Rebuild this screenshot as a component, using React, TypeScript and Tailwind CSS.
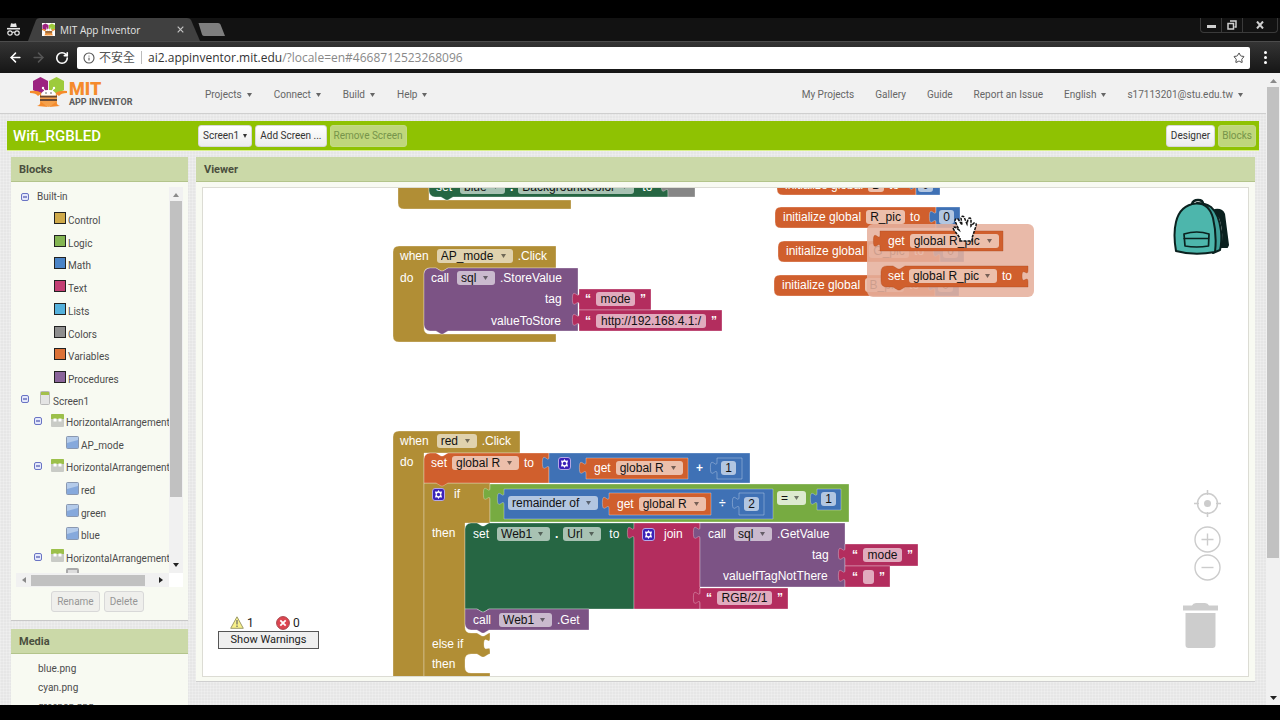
import type { ReactNode } from 'react';
import { ArrowLeft, ArrowRight, Info, RotateCw, Star } from 'lucide-react';

const GOLD = '#b18e35';
const PURPLE = '#7c5385';
const PINK = '#b32d5e';
const BLUE = '#3f71b5';
const ORANGE = '#d05f2d';
const LIME = '#77ab41';
const FOREST = '#266643';

// How far the workspace is scrolled: block coordinates are shifted by this.
const PAN = { x: 203, y: 188 };

const CATEGORIES = [
  { name: 'Control', swatch: 'bg-[#cfa94a]' },
  { name: 'Logic', swatch: 'bg-[#84b552]' },
  { name: 'Math', swatch: 'bg-[#4a83c6]' },
  { name: 'Text', swatch: 'bg-[#c33f74]' },
  { name: 'Lists', swatch: 'bg-[#55b1dc]' },
  { name: 'Colors', swatch: 'bg-[#8e8e8e]' },
  { name: 'Variables', swatch: 'bg-[#dc7237]' },
  { name: 'Procedures', swatch: 'bg-[#8a649a]' },
];

const COMPONENTS: { name: string; container?: boolean }[] = [
  { name: 'HorizontalArrangement1', container: true },
  { name: 'AP_mode' },
  { name: 'HorizontalArrangement2', container: true },
  { name: 'red' },
  { name: 'green' },
  { name: 'blue' },
  { name: 'HorizontalArrangement3', container: true },
];

export default function App() {
  return (
    <div className="flex h-screen flex-col overflow-hidden bg-black pt-[18px] pb-[15px] font-['Roboto',sans-serif]">
      <TabStrip />
      <Toolbar />
      <div className="flex min-h-0 flex-1">
        <div className="flex min-w-0 flex-1 flex-col bg-[#e6e6e6] bg-[linear-gradient(90deg,#ffffff30_1px,transparent_1px),linear-gradient(#ffffff30_1px,transparent_1px)] bg-size-[3px_3px]">
          <Header />
          <ProjectBar />
          <div className="flex min-h-0 flex-1 gap-2 pr-[11px] pl-[11px]">
            <aside className="flex w-[177px] shrink-0 flex-col gap-2 overflow-hidden">
              <BlocksPanel />
              <MediaPanel />
            </aside>
            <Viewer />
          </div>
        </div>
        <PageScrollbar />
      </div>
    </div>
  );
}

/* ---------- browser chrome ---------- */

function TabStrip() {
  return (
    <div className="flex h-[23px] shrink-0 bg-[#121212]">
      <svg className="mt-1 ml-[6px] size-[15px]" viewBox="0 0 15 15" fill="none" stroke="#e8e8e8">
        <path d="M4.2 5 5 1.2 7.5 1.8 10 1.2 10.8 5Z" fill="#e8e8e8" stroke="none" />
        <path d="M1 6.7h13" strokeWidth="1.6" />
        <circle cx="4" cy="11" r="2.2" strokeWidth="1.2" />
        <circle cx="11" cy="11" r="2.2" strokeWidth="1.2" />
        <path d="M6.2 10.6q1.3-.8 2.6 0" strokeWidth="1.2" />
      </svg>
      <div className="relative ml-[7px] flex w-[172px] items-center pr-[16px] pl-[14px]">
        <svg className="absolute inset-0 size-full" viewBox="0 0 172 23" preserveAspectRatio="none">
          <path d="M0 23 8 2Q9 0 12 0H159Q162 0 163 2L172 23Z" fill="#404040" />
        </svg>
        <Bee className="relative size-[13px] bg-white" viewBox="2 0 32 30" />
        <span className="relative ml-[5px] flex-1 truncate font-['Open_Sans',sans-serif] text-[10px] leading-[20px] text-[#e4e4e4]">
          MIT App Inventor
        </span>
        <button aria-label="Close tab" className="relative">
          <svg className="size-[7px]" viewBox="0 0 7 7" stroke="#c4c4c4" strokeWidth="1.2">
            <path d="M.7.7l5.6 5.6M6.3.7.7 6.3" />
          </svg>
        </button>
      </div>
      <button aria-label="New tab" className="-ml-[3px] self-center">
        <svg className="h-[15px] w-[29px]" viewBox="0 0 29 15">
          <path d="M1.5 1H21q2 0 2.5 1.5L28 14H7.5Q5.5 14 5 12.5Z" fill="#7e7e7e" />
        </svg>
      </button>
      <div className="mr-[2px] ml-auto flex h-[15px] rounded-b border border-t-0 border-[#3a3a3a]">
        <button aria-label="Minimize" className="flex w-[20px] items-center justify-center">
          <span className="mt-[3px] h-[3px] w-[9px] bg-[#cfcfcf]" />
        </button>
        <button aria-label="Restore" className="flex w-[22px] items-center justify-center border-x border-[#3a3a3a]">
          <svg className="size-[10px]" viewBox="0 0 10 10" fill="none" stroke="#cfcfcf" strokeWidth="1.5">
            <path d="M3 1h6v6H7.5" />
            <rect x="1" y="3.5" width="5.5" height="5.5" />
          </svg>
        </button>
        <button aria-label="Close" className="flex w-[34px] items-center justify-center">
          <svg className="size-[8px]" viewBox="0 0 8 8" stroke="#cfcfcf" strokeWidth="2">
            <path d="M1 .5l6 7M7 .5l-6 7" />
          </svg>
        </button>
      </div>
    </div>
  );
}

function Toolbar() {
  return (
    <div className="flex h-8 shrink-0 items-center border-t border-[#4c4c4c] bg-linear-to-b from-[#343434] to-[#161616] pr-[13px] pl-2">
      <button aria-label="Back">
        <ArrowLeft className="size-[15px] text-white" strokeWidth={2.4} />
      </button>
      <button aria-label="Forward" className="ml-2">
        <ArrowRight className="size-[15px] text-[#565656]" strokeWidth={2.4} />
      </button>
      <button aria-label="Reload" className="mr-2 ml-[9px]">
        <RotateCw className="size-[14px] text-white" strokeWidth={2.8} />
      </button>
      <div className="flex h-[22px] flex-1 items-center rounded-xs bg-white pr-[5px] pl-[6px] font-['Open_Sans','Noto_Sans_CJK_TC',sans-serif] text-[12px] text-[#555]">
        <Info className="size-[12px]" strokeWidth={2.2} />
        <span className="ml-1 leading-[22px]">不安全</span>
        <span className="mr-[6px] ml-[6px] h-[13px] w-px bg-[#bbb]" />
        <div className="flex-1 leading-[22px] text-[#888]">
          <span className="text-[#333]">ai2.appinventor.mit.edu</span>/?locale=en#4668712523268096
        </div>
        <button aria-label="Bookmark">
          <Star className="size-[12px] text-[#444]" strokeWidth={2} />
        </button>
      </div>
      <button aria-label="Browser menu" className="ml-[14px] flex flex-col gap-[2px]">
        <span className="size-[3px] rounded-full bg-white" />
        <span className="size-[3px] rounded-full bg-white" />
        <span className="size-[3px] rounded-full bg-white" />
      </button>
    </div>
  );
}

function PageScrollbar() {
  return (
    <div className="flex w-[14px] shrink-0 flex-col items-center justify-between bg-[#f1f1f1] pt-[6px] pb-[5px]">
      <Triangle className="h-[4px] w-[7px] rotate-180 text-[#8a8a8a]" />
      <div className="mt-[4px] mb-auto h-[471px] w-[12px] bg-[#c1c1c1]" />
      <Triangle className="h-[4px] w-[7px] text-[#222]" />
    </div>
  );
}

function Triangle({ className }: { className: string }) {
  return (
    <svg className={className} viewBox="0 0 8 6" preserveAspectRatio="none" fill="currentColor">
      <path d="M0 0h8L4 6Z" />
    </svg>
  );
}

/* ---------- app header ---------- */

function Bee({ className, viewBox = '0 0 37 30' }: { className: string; viewBox?: string }) {
  return (
    <svg className={className} viewBox={viewBox}>
      <path d="M10.500 0 18 4v9l-7.500 4L3 13V4Z" fill="#9c2380" />
      <path d="M26.500 0 34 4v9l-7.500 4L19 13V4Z" fill="#9dcb3b" />
      <path d="M0 14q7-1 12 2l-4 3q-2-3-8-3ZM37 14q-7-1-12 2l4 3q2-3 8-3Z" fill="#f58b2c" />
      <path d="M10 17h17v9l-8.500 4-8.500-4Z" fill="#f5a04a" />
      <path d="M10 19.500h17M10 23h17" stroke="#6a4a33" strokeWidth="1.800" />
      <path d="M7 29q3-1 4-4l7 5ZM30 29q-3-1-4-4l-7 5Z" fill="#f58b2c" />
      <path d="M11 18.500q0-5.500 7.500-5.500t7.500 5.500Z" fill="#fff" />
      <path d="M15 14l-2-3M22 14l2-3" stroke="#fff" strokeWidth="1.200" />
      <circle cx="13" cy="11" r="1.200" fill="#fff" />
      <circle cx="24" cy="11" r="1.200" fill="#fff" />
      <circle cx="16" cy="16" r=".8" fill="#555" />
      <circle cx="21" cy="16" r=".8" fill="#555" />
    </svg>
  );
}

function MenuButton({ label }: { label: string }) {
  return (
    <button className="flex items-center gap-[5px]">
      {label}
      <Triangle className="h-[4px] w-[5px]" />
    </button>
  );
}

function Header() {
  return (
    <header className="flex h-[41px] shrink-0 items-center border-b border-[#cfcfcf] bg-[#f1f1f1] pr-[23px] pl-[30px] text-[10px] text-[#666]">
      <a href="#home" className="flex w-[175px] items-center gap-[2px] pb-[3px]">
        <Bee className="h-[30px] w-[37px]" />
        <span className="flex flex-col pt-[4px]">
          <b className="text-[18px] leading-[18px] font-black text-[#f58b2c]">MIT</b>
          <b className="text-[9px] leading-[9px] font-bold whitespace-nowrap text-[#5c5c5c]">APP INVENTOR</b>
        </span>
      </a>
      <nav className="flex gap-[22px] pt-[3px]">
        <MenuButton label="Projects" />
        <MenuButton label="Connect" />
        <MenuButton label="Build" />
        <MenuButton label="Help" />
      </nav>
      <nav className="ml-auto flex gap-[21px] pt-[3px]">
        <a href="#projects">My Projects</a>
        <a href="#gallery">Gallery</a>
        <a href="#guide">Guide</a>
        <a href="#issue">Report an Issue</a>
        <MenuButton label="English" />
        <MenuButton label="s17113201@stu.edu.tw" />
      </nav>
    </header>
  );
}

const BAR_BUTTON =
  'flex h-[22px] items-center gap-[4px] rounded-[3px] border border-[#d8d8d8] bg-linear-to-b from-white to-[#ececec] px-[4px] text-[10px] text-[#333]';
const BAR_BUTTON_OFF =
  'h-[22px] rounded-[3px] border border-[#c3da85] bg-[#bfd67c] px-[3px] text-[10px] text-[#76944a]';

function ProjectBar() {
  return (
    <div className="mx-[7px] mt-[7px] mb-[6px] flex h-[30px] shrink-0 items-center gap-[3px] border-b border-[#d9f08c] bg-[#8fc202] pr-[3px] pl-[6px]">
      <h1 className="w-[182px] pt-[2px] text-[15px] font-medium text-white">Wifi_RGBLED</h1>
      <button className={BAR_BUTTON}>
        Screen1
        <Triangle className="h-[4px] w-[4px]" />
      </button>
      <button className={BAR_BUTTON}>Add Screen ...</button>
      <button className={BAR_BUTTON_OFF}>Remove Screen</button>
      <button className={`${BAR_BUTTON} ml-auto`}>Designer</button>
      <button className={BAR_BUTTON_OFF}>Blocks</button>
    </div>
  );
}

/* ---------- side panels ---------- */

function PanelHead({ title }: { title: string }) {
  return (
    <h2 className="h-[25px] shrink-0 border-b border-[#b3c48b] bg-[#cbd9a8] px-2 text-[11px] leading-[25px] font-bold text-[#4a4f3e]">
      {title}
    </h2>
  );
}

function Collapse() {
  return (
    <button aria-label="Collapse" className="size-[8px] shrink-0">
      <svg className="block size-[8px]" viewBox="0 0 8 8" fill="#e4e8fb" stroke="#6a74c4">
        <rect x=".5" y=".5" width="7" height="7" rx="1.5" />
        <path d="M2 4h4" stroke="#3038a0" />
      </svg>
    </button>
  );
}

function BlocksPanel() {
  return (
    <section className="flex h-[464px] shrink-0 flex-col border-b border-[#c8c8c8] bg-[#f8faf2]">
      <PanelHead title="Blocks" />
      <div className="mx-[5px] mt-[5px] flex h-[400px] shrink-0 text-[10px] text-[#4c4c4c]">
        <div className="flex min-w-0 flex-1 flex-col overflow-hidden">
          <div className="flex h-[19px] shrink-0 items-center gap-2 pl-[5px]">
            <Collapse />
            Built-in
          </div>
          <ul className="flex h-[182px] shrink-0 flex-col pl-[38px]">
            {CATEGORIES.map((c) => (
              <li key={c.name} className="flex flex-1 items-end gap-[2px]">
                <span className={`mb-[5px] size-[12px] border border-[#222] ${c.swatch}`} />
                <span className="leading-[16px]">{c.name}</span>
              </li>
            ))}
          </ul>
          <div className="flex h-[22px] shrink-0 items-center pl-[5px]">
            <Collapse />
            <svg className="mb-[2px] ml-[11px] h-[14px] w-[10px]" viewBox="0 0 10 14">
              <rect x=".5" y=".5" width="9" height="13" rx="1" fill="#e4e4e4" stroke="#b9b9b9" />
              <path d="M1 1h8v3H1Z" fill="#a4c04c" />
            </svg>
            <span className="ml-[3px] pt-[5px] leading-[16px]">Screen1</span>
          </div>
          <div className="min-h-0 flex-1 overflow-hidden">
            <ul className="flex h-[171px] flex-col">
              {COMPONENTS.map((c) =>
                c.container ? (
                  <li key={c.name} className="flex flex-1 items-center pl-[18px]">
                    <Collapse />
                    <svg className="mr-[2px] mb-[2px] ml-[9px] size-[13px] shrink-0" viewBox="0 0 13 13">
                      <rect width="13" height="13" rx="1" fill="#c9cbc6" />
                      <path d="M0 1q0-1 1-1h11q1 0 1 1v4H0Z" fill="#9cc04a" />
                      <rect x="2.5" y="4.5" width="3" height="3" fill="#fff" />
                      <rect x="7.5" y="4.5" width="3" height="3" fill="#fff" />
                    </svg>
                    <span className="pt-[4px] leading-[16px]">{c.name}</span>
                  </li>
                ) : (
                  <li key={c.name} className="flex flex-1 items-center gap-[2px] pl-[50px]">
                    <svg className="mb-[2px] size-[13px] shrink-0" viewBox="0 0 13 13">
                      <rect x=".5" y=".5" width="12" height="12" rx="1" fill="#86a9dc" stroke="#8a98b0" />
                      <path d="M1 1h11v3L1 7Z" fill="#b4cbea" />
                    </svg>
                    <span className="pt-[4px] leading-[16px]">{c.name}</span>
                  </li>
                ),
              )}
              <li className="pl-[50px]">
                <div className="h-[13px] w-[13px] rounded-xs border-2 border-[#aaa] bg-[#ddd]" />
              </li>
            </ul>
          </div>
          <div className="flex h-[14px] shrink-0 items-center gap-[4px] bg-[#f1f1f1] px-[5px]">
            <Triangle className="h-[4px] w-[6px] shrink-0 rotate-90 text-[#8a8a8a]" />
            <div className="h-[11px] w-[114px] bg-[#c1c1c1]" />
            <Triangle className="ml-auto h-[4px] w-[6px] shrink-0 -rotate-90 text-[#222]" />
          </div>
        </div>
        <div className="flex w-[14px] flex-col bg-white">
          <div className="flex flex-1 flex-col items-center bg-[#f1f1f1] pt-[6px] pb-[6px]">
            <Triangle className="h-[4px] w-[6px] rotate-180 text-[#8a8a8a]" />
            <div className="mt-[4px] h-[296px] w-[12px] bg-[#c1c1c1]" />
            <Triangle className="mt-auto h-[4px] w-[6px] text-[#222]" />
          </div>
          <div className="h-[14px]" />
        </div>
      </div>
      <div className="mt-[4px] flex justify-center gap-[4px] pr-[4px] text-[10px] text-[#969696]">
        <button className="h-[21px] rounded-[3px] border border-[#d8d8d8] bg-[#efefec] px-[5px]">Rename</button>
        <button className="h-[21px] rounded-[3px] border border-[#d8d8d8] bg-[#efefec] px-[5px]">Delete</button>
      </div>
    </section>
  );
}

function MediaPanel() {
  return (
    <section className="flex-1 shrink-0 bg-[#f8faf2]">
      <PanelHead title="Media" />
      <ul className="pt-[5px] pl-[27px] text-[10px] leading-[19px] text-[#4c4c4c]">
        <li>blue.png</li>
        <li>cyan.png</li>
        <li>greenon.png</li>
      </ul>
    </section>
  );
}

/* ---------- workspace ---------- */

// Left-hand plug, drawn upwards from its lower end.
const PLUG = 'c0,-8 -6.6,6.6 -6.6,-6.2 s6.6,2 6.6,-6.2';

function Value({ x, y, w, h, fill }: { x: number; y: number; w: number; h: number; fill: string }) {
  return <path d={`M${x} ${y}h${w}v${h}h${-w}V${y + 16}${PLUG}Z`} fill={fill} />;
}

// Statement block with a notch on top and a bump underneath.
function Statement({
  x,
  y,
  w,
  h,
  fill,
  square,
  last = true,
}: {
  x: number;
  y: number;
  w: number;
  h: number;
  fill: string;
  square?: boolean;
  last?: boolean;
}) {
  const r = 6;
  const top = square ? `M${x} ${y}` : `M${x} ${y + r}a${r} ${r} 0 0 1 ${r} ${-r}`;
  const end = last ? `H${x + r}a${r} ${r} 0 0 1 ${-r} ${-r}Z` : `H${x}Z`;
  return (
    <path
      d={`${top}H${x + 12}l5 3h2l5 -3H${x + w}V${y + h}H${x + 24}l-5 3h-2l-5 -3${end}`}
      fill={fill}
    />
  );
}

function Shapes() {
  return (
    <svg className="absolute inset-0 size-full">
      <g transform={`translate(${-PAN.x} ${-PAN.y})`} stroke="#ffffff" strokeOpacity=".3" strokeWidth="1">
        {/* tail of the handler above */}
        <path d="M398 170V203q0 6 6 6H571V200H429V170Z" fill={GOLD} />
        <Statement x={429} y={176} w={239} h={21} fill={FOREST} />
        <Value x={668} y={176} w={27} h={21} fill="#868686" />

        {/* AP_mode.Click */}
        <path
          d="M393 252q0-6 6-6H556V268H448l-5 3h-2l-5-3h-6q-6 0-6 6V328q0 6 6 6H556V342H399q-6 0-6-6Z"
          fill={GOLD}
        />
        <Statement x={424} y={268} w={154} h={63} fill={PURPLE} />
        <Value x={579} y={289} w={72} h={21} fill={PINK} />
        <Value x={579} y={310} w={143} h={21} fill={PINK} />

        {/* red.Click */}
        <path d="M393 437q0-6 6-6H520V453H424V700H393Z" fill={GOLD} />
        <path
          d="M424 483H490V523H465V627q0 6 6 6h6l5 3h2l5-3h1v5c0 8-6-4-6 6s6 0 6 7V654h-1l-5 3h-2l-5-3h-6q-6 0-6 6v7q0 6 6 6H490V700H424Z"
          fill={GOLD}
        />
        <Statement x={424} y={453} w={125} h={30} fill={ORANGE} last={false} />
        <Value x={549} y={453} w={201} h={30} fill={BLUE} />
        <Value x={586} y={458} w={102} h={21} fill={ORANGE} />
        <Value x={717} y={458} w={25} h={21} fill={BLUE} />
        <Value x={490} y={484} w={359} h={38} fill={LIME} />
        <Value x={504} y={489} w={269} h={30} fill={BLUE} />
        <Value x={609} y={493} w={102} h={22} fill={ORANGE} />
        <Value x={739} y={493} w={25} h={22} fill={BLUE} />
        <Value x={817} y={489} w={24} h={21} fill={BLUE} />
        <Statement x={465} y={523} w={169} h={86} fill={FOREST} last={false} />
        <Value x={634} y={523} w={66} h={86} fill={PINK} />
        <Value x={700} y={523} w={145} h={64} fill={PURPLE} />
        <Value x={845} y={544} w={73} h={22} fill={PINK} />
        <Value x={845} y={566} w={45} h={21} fill={PINK} />
        <Value x={700} y={588} w={88} h={21} fill={PINK} />
        <Statement x={465} y={609} w={124} h={21} fill={PURPLE} square />

        {/* global initialisers */}
        <path d="M916 174V195H783q-6 0-6-6V174Z" fill={ORANGE} />
        <Value x={916} y={174} w={24} h={21} fill={BLUE} />
        <path d="M936 207V228H781q-6 0-6-6V213q0-6 6-6Z" fill={ORANGE} />
        <Value x={936} y={207} w={24} h={21} fill={BLUE} />
        <path d="M940 241V262H784q-6 0-6-6V247q0-6 6-6Z" fill={ORANGE} />
        <Value x={940} y={241} w={24} h={21} fill={BLUE} />
        <path d="M935 275V296H780q-6 0-6-6V281q0-6 6-6Z" fill={ORANGE} />
        <Value x={935} y={275} w={24} h={21} fill={BLUE} />
      </g>
    </svg>
  );
}

/** One line of a block's fields: x is its left edge, y its vertical middle. */
function Row({ x, y, children }: { x: number; y: number; children: ReactNode }) {
  return (
    <div
      className="absolute flex h-[14px] items-center gap-[5px] leading-[14px] whitespace-nowrap text-white"
      style={{ left: x - PAN.x, top: y - PAN.y - 7 }}
    >
      {children}
    </div>
  );
}

function Drop({ value, w, tone = 'bg-white/60' }: { value: string; w: string; tone?: string }) {
  return (
    <span className={`relative h-[14px] ${w}`}>
      <select
        aria-label={value}
        className={`block h-[14px] w-full appearance-none rounded-[3px] pl-1 leading-[14px] text-[#111] ${tone}`}
      >
        <option>{value}</option>
      </select>
      <Triangle className="pointer-events-none absolute top-[5px] right-[7px] h-[4px] w-[5px] text-black/50" />
    </span>
  );
}

function Field({ value, w, label }: { value: string; w: string; label: string }) {
  return (
    <input
      aria-label={label}
      defaultValue={value}
      className={`h-[14px] rounded-[3px] bg-white/60 text-center leading-[14px] text-[#111] ${w}`}
    />
  );
}

function Quoted({ x, y, value, w }: { x: number; y: number; value: string; w: string }) {
  return (
    <Row x={x} y={y}>
      <b>“</b>
      <Field value={value} w={w} label="Text" />
      <b>”</b>
    </Row>
  );
}

function Gear({ x, y }: { x: number; y: number }) {
  return (
    <Row x={x} y={y}>
      <button
        aria-label="Edit block shape"
        className="flex size-[13px] items-center justify-center rounded-[3px] border border-[#b4a8e6] bg-[#3a22b8]"
      >
        <svg className="size-[9px]" viewBox="0 0 10 10">
          <path d="M5 0l1.300 1.900 2.700-.1L8 5l1 3.200-2.700-.1L5 10 3.700 8.100 1 8.200 2 5 1 1.800l2.700.1Z" fill="#fff" />
          <circle cx="5" cy="5" r="1.900" fill="#3a22b8" />
        </svg>
      </button>
    </Row>
  );
}

function Initializer({ x, y, name, w }: { x: number; y: number; name: string; w: string }) {
  return (
    <Row x={x} y={y}>
      initialize global
      <Field value={name} w={w} label="Variable name" />
      <span className="pr-[14px]">to</span>
      <Field value="0" w="w-[15px]" label="Number" />
    </Row>
  );
}

function Blocks() {
  return (
    <div className="absolute inset-0 font-['Liberation_Sans',sans-serif] text-[12px]">
      <Shapes />

      <Row x={436} y={187}>
        <span className="pr-[3px]">set</span>
        <Drop value="blue" w="w-[45px]" />
        <b>.</b>
        <Drop value="BackgroundColor" w="w-[116px]" />
        <span className="pl-[3px]">to</span>
      </Row>

      <Row x={400} y={256}>
        <span className="pr-[3px]">when</span>
        <Drop value="AP_mode" w="w-[76px]" />
        .Click
      </Row>
      <Row x={400} y={278}>do</Row>
      <Row x={431} y={278}>
        <span className="pr-[3px]">call</span>
        <Drop value="sql" w="w-[38px]" />
        .StoreValue
      </Row>
      <Row x={545} y={299}>tag</Row>
      <Row x={491} y={321}>valueToStore</Row>
      <Quoted x={585} y={299} value="mode" w="w-[39px]" />
      <Quoted x={585} y={321} value="http://192.168.4.1:/" w="w-[110px]" />

      <Row x={400} y={441}>
        <span className="pr-[3px]">when</span>
        <Drop value="red" w="w-[40px]" />
        .Click
      </Row>
      <Row x={400} y={462}>do</Row>
      <Row x={431} y={463}>
        set
        <Drop value="global R" w="w-[67px]" />
        to
      </Row>
      <Gear x={558} y={463} />
      <Row x={594} y={468}>
        get
        <Drop value="global R" w="w-[67px]" />
      </Row>
      <Row x={696} y={468}>
        <b>+</b>
      </Row>
      <Row x={721} y={468}>
        <Field value="1" w="w-[15px]" label="Number" />
      </Row>

      <Gear x={432} y={494} />
      <Row x={454} y={494}>if</Row>
      <Row x={508} y={503}>
        <Drop value="remainder of" w="w-[90px]" />
      </Row>
      <Row x={617} y={504}>
        get
        <Drop value="global R" w="w-[67px]" />
      </Row>
      <Row x={719} y={503}>
        <b>÷</b>
      </Row>
      <Row x={744} y={504}>
        <Field value="2" w="w-[15px]" label="Number" />
      </Row>
      <Row x={777} y={498}>
        <Drop value="=" w="w-[29px]" tone="bg-white/75" />
      </Row>
      <Row x={821} y={499}>
        <Field value="1" w="w-[15px]" label="Number" />
      </Row>

      <Row x={432} y={533}>then</Row>
      <Row x={473} y={534}>
        <span className="pr-[3px]">set</span>
        <Drop value="Web1" w="w-[53px]" />
        <b>.</b>
        <Drop value="Url" w="w-[38px]" />
        <span className="pl-[3px]">to</span>
      </Row>
      <Gear x={642} y={534} />
      <Row x={664} y={534}>join</Row>
      <Row x={708} y={534}>
        <span className="pr-[3px]">call</span>
        <Drop value="sql" w="w-[38px]" />
        .GetValue
      </Row>
      <Row x={812} y={555}>tag</Row>
      <Row x={723} y={576}>valueIfTagNotThere</Row>
      <Quoted x={852} y={555} value="mode" w="w-[39px]" />
      <Quoted x={852} y={577} value="" w="w-[11px]" />
      <Quoted x={706} y={598} value="RGB/2/1" w="w-[55px]" />
      <Row x={473} y={620}>
        <span className="pr-[3px]">call</span>
        <Drop value="Web1" w="w-[53px]" />
        .Get
      </Row>
      <Row x={432} y={644}>else if</Row>
      <Row x={432} y={664}>then</Row>

      <Initializer x={785} y={185} name="B" w="w-[16px]" />
      <Initializer x={783} y={217} name="R_pic" w="w-[39px]" />
      <Initializer x={786} y={251} name="G_pic" w="w-[40px]" />
      <Initializer x={782} y={285} name="B_pic" w="w-[39px]" />

      <VariableFlyout />
    </div>
  );
}

function VariableFlyout() {
  return (
    <>
      <div
        className="absolute h-[73px] w-[167px] rounded-md bg-[#e6b19d]/88"
        style={{ left: 867 - PAN.x, top: 224 - PAN.y }}
      />
      <svg className="absolute inset-0 size-full">
        <g transform={`translate(${-PAN.x} ${-PAN.y})`} stroke="#a8481d" strokeOpacity=".35">
          <Value x={880} y={231} w={123} h={20} fill={ORANGE} />
          <path
            d="M881 272q0-6 6-6h6l5 3h2l5-3H1028v4c0 8-6-4-6 6s6-2 6 6v5H905l-5 3h-2l-5-3h-6q-6 0-6-6Z"
            fill={ORANGE}
          />
        </g>
      </svg>
      <Row x={888} y={241}>
        get
        <Drop value="global R_pic" w="w-[89px]" />
      </Row>
      <Row x={888} y={276}>
        set
        <Drop value="global R_pic" w="w-[88px]" />
        to
      </Row>
      <svg
        className="absolute h-[28px] w-[26px]"
        viewBox="0 0 26 28"
        style={{ left: 952 - PAN.x, top: 215 - PAN.y }}
      >
        <path
          d="M8 26v-3L2 15q-2-3 1-3l4 3L3 6q0-3 3-2l4 6L9 3q1-3 3-1l3 7 1-5q2-2 3 0v7l3-3q3 0 2 3l-3 9-1 3v3Z"
          fill="#fff"
          stroke="#111"
          strokeWidth="1.5"
          strokeDasharray="3 1"
        />
      </svg>
    </>
  );
}

function Backpack() {
  return (
    <svg className="absolute top-[10px] right-[18px] h-[58px] w-[57px]" viewBox="0 0 57 58">
      <g stroke="#0b211f" strokeWidth="2" strokeLinecap="round" strokeLinejoin="round">
        <path d="M42 12q7-1 9 4l4 31-1 2h-6v-4l2-1q1-14-3-24-2-4-5-5Z" fill="#0b211f" />
        <path d="M19 6q1-4 6-4t5 4" fill="none" strokeWidth="2.5" />
        <path d="M24 5q8 0 14 4 8 7 10 24 1 11-1 19l-7 3Z" fill="#3f9f98" />
        <path d="M3 53Q0 36 3 24 7 7 23 5.500q13-.5 17 14.500 4 17 2 34-21 4-39-1Z" fill="#4db6ac" />
        <path d="M11 36q13-4 25 0l-.5 12q-12 2-23.500 0ZM11 40.500h25" fill="none" strokeWidth="1.700" />
      </g>
    </svg>
  );
}

function ZoomControls() {
  return (
    <div className="absolute right-[27px] bottom-[95px] flex flex-col items-center gap-px text-[#ccc]">
      <button aria-label="Center workspace" className="mb-[8px]">
        <svg className="block size-[27px]" viewBox="0 0 27 27" fill="none" stroke="currentColor" strokeWidth="1.5">
          <circle cx="13.5" cy="13.5" r="10" />
          <circle cx="13.5" cy="13.5" r="3.5" fill="currentColor" stroke="none" />
          <path d="M13.5 0v5M13.5 22v5M0 13.5h5M22 13.5h5" />
        </svg>
      </button>
      <button aria-label="Zoom in">
        <svg className="block size-[27px]" viewBox="0 0 27 27" fill="none" stroke="currentColor" strokeWidth="1.4">
          <circle cx="13.5" cy="13.5" r="12.5" />
          <path d="M13.5 7.5v12M7.5 13.5h12" />
        </svg>
      </button>
      <button aria-label="Zoom out">
        <svg className="block size-[27px]" viewBox="0 0 27 27" fill="none" stroke="currentColor" strokeWidth="1.4">
          <circle cx="13.5" cy="13.5" r="12.5" />
          <path d="M7.5 13.5h12" />
        </svg>
      </button>
    </div>
  );
}

function Trash() {
  return (
    <svg className="absolute right-[30px] bottom-[28px] h-[45px] w-[35px]" viewBox="0 0 35 45" fill="#cdcdcd">
      <path d="M0 2.500h9Q10 0 13 0h9q3 0 4 2.500h9V7.500H0ZM2.500 10h30v32q0 3-3 3h-24q-3 0-3-3Z" />
    </svg>
  );
}

function Warnings() {
  return (
    <div className="absolute bottom-[27px] left-[15px] flex w-[101px] flex-col text-[12px] text-[#222]">
      <div className="flex h-[17px] items-center pl-[12px]">
        <svg className="h-[13px] w-[14px]" viewBox="0 0 14 13">
          <path d="M7 .8 13.300 12.300H.7Z" fill="#f7f08a" stroke="#9c9a6a" strokeLinejoin="round" />
          <path d="M7 4v4.500M7 9.500v1.500" stroke="#666" strokeWidth="1.200" />
        </svg>
        <span className="ml-[3px] w-[29px]">1</span>
        <svg className="size-[14px]" viewBox="0 0 14 14">
          <circle cx="7" cy="7" r="6.400" fill="#dc4550" stroke="#a8464c" />
          <path d="M4.300 4.300l5.400 5.400M9.700 4.300 4.300 9.700" stroke="#fff" strokeWidth="1.800" />
        </svg>
        <span className="ml-[3px]">0</span>
      </div>
      <button className="h-[18px] border border-[#555] bg-[#efefef] text-[11px] leading-[16px]">Show Warnings</button>
    </div>
  );
}

function Viewer() {
  return (
    <section className="mb-[23px] flex min-w-0 flex-1 flex-col border-b border-[#cfcfcf] bg-[#f8faf2]">
      <PanelHead title="Viewer" />
      <div className="relative mx-[6px] mt-[5px] mb-[4px] flex-1 overflow-hidden border border-[#dcdcd4] bg-white">
        <Blocks />
        <Backpack />
        <ZoomControls />
        <Trash />
        <Warnings />
      </div>
    </section>
  );
}
